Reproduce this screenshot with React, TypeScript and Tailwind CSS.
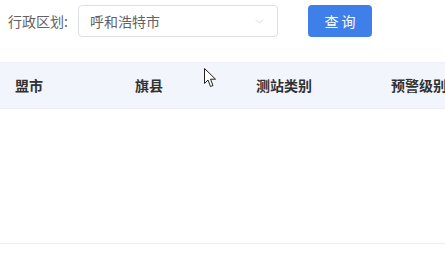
import { ChevronDown } from "lucide-react"

const columns = [
    { title: "盟市", width: "w-[120px]" },
    { title: "旗县", width: "w-[121px]" },
    { title: "测站类别", width: "w-[135px]" },
    { title: "预警级别", width: "w-[130px]" },
    { title: "预警时间", width: "w-[130px]" },
]

export default function App() {
    return (
        <div className="relative h-[278px] w-[445px] overflow-hidden bg-white font-['Noto_Sans_CJK_SC',sans-serif]">
            <div className="flex h-[42px] items-start pt-[5px]">
                <span className="ml-[8px] mt-[6px] w-[70px] text-[14px] leading-[20px] text-[#606266]">行政区划:</span>
                <div className="flex h-[32px] w-[200px] items-center justify-between rounded-[4px] border border-[#dcdfe6] pl-[11px] pr-[11px]">
                    <span className="text-[14px] text-[#606266]">呼和浩特市</span>
                    <ChevronDown className="h-[13px] w-[13px] text-[#c0c4cc]" strokeWidth={1.2} />
                </div>
                <button className="ml-[30px] h-[32px] w-[64px] rounded-[4px] bg-[#3e7fe9] text-[14px] text-white">
                    查 询
                </button>
            </div>

            <div className="mt-[20px] w-max">
                <div className="flex h-[47px] items-center border-y border-[#ebeef5] bg-[#f2f6fc]">
                    {columns.map(col => (
                        <div key={col.title} className={`${col.width} pl-[15px] text-[14px] font-bold text-[#303133]`}>
                            {col.title}
                        </div>
                    ))}
                </div>
                <div className="h-[135px] border-b border-[#ebeef5]" />
            </div>

            <svg className="absolute left-[204px] top-[68px]" width="13" height="20" viewBox="0 0 13 20">
                <path d="M0.5 0.5 L0.5 15.5 L4 12 L6.5 18.5 L9 17.5 L6.5 11.2 L11.5 11.2 Z" fill="white" stroke="#222" strokeWidth="1" strokeLinejoin="round" />
            </svg>
        </div>
    )
}
